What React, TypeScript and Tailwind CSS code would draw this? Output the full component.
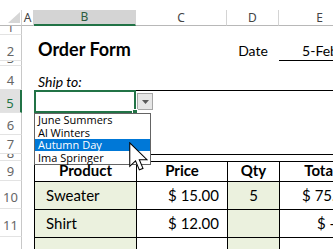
import React from "react";

type Row = { n: number; h: string; pb: string; sel?: boolean };

const rows: Row[] = [
  { n: 1, h: "h-[9px]", pb: "pb-[0px]" },
  { n: 2, h: "h-[26px]", pb: "pb-[2px]" },
  { n: 3, h: "h-[5px]", pb: "pb-[0px]" },
  { n: 4, h: "h-[24px]", pb: "pb-[2px]" },
  { n: 5, h: "h-[23px]", pb: "pb-[2px]", sel: true },
  { n: 6, h: "h-[22px]", pb: "pb-[2px]" },
  { n: 7, h: "h-[19px]", pb: "pb-[2px]" },
  { n: 8, h: "h-[7px]", pb: "pb-[0px]" },
  { n: 9, h: "h-[20px]", pb: "pb-[2px]" },
  { n: 10, h: "h-[28px]", pb: "pb-[4px]" },
  { n: 11, h: "h-[28px]", pb: "pb-[4px]" },
  { n: 12, h: "h-[28px]", pb: "pb-[4px]" },
];

const colA = "w-[12px] shrink-0";
const colB = "w-[102px] shrink-0";
const colC = "w-[91px] shrink-0";
const colD = "w-[52px] shrink-0";
const colE = "w-[82px] shrink-0";

const tbl = "border-t border-l border-black";
const tint = "bg-[#ebf1de]";

const names = ["June Summers", "Al Winters", "Autumn Day", "Ima Springer"];

function RowHeader({ row }: { row: Row }) {
  return (
    <div
      className={`${row.h} ${row.pb} flex items-end justify-center overflow-hidden border-b border-b-[#e3e3e3] ${
        row.sel
          ? "bg-[#e1e1e1] border-r-2 border-r-[#217346] text-[#217346]"
          : "border-r border-r-[#c8c8c8] text-[#666666]"
      }`}
    >
      <span>{row.n}</span>
    </div>
  );
}

function ColHeader() {
  const cell = "flex items-center justify-center border-r border-b border-r-[#d4d4d4] border-b-[#b8b8b8]";
  return (
    <div className="flex h-[16px] font-['Noto_Sans',sans-serif] text-[12px] leading-none text-[#444444]">
      <div className={`w-[22px] shrink-0 relative ${cell}`}>
        <svg width="21" height="15" className="absolute left-0 top-0">
          <polygon points="8,13 20,13 20,2" fill="#d6d6d6" />
        </svg>
      </div>
      <div className={`${colA} ${cell}`}>A</div>
      <div className={`${colB} flex items-center justify-center border-r border-r-[#d4d4d4] border-b-2 border-b-[#217346] bg-[#d4d4d4] text-[#2b5c3e]`}>
        B
      </div>
      <div className={`${colC} ${cell}`}>C</div>
      <div className={`${colD} ${cell}`}>D</div>
      <div className={`${colE} ${cell}`}>E</div>
    </div>
  );
}

function DropList() {
  return (
    <div className="absolute left-0 top-0 z-10 w-[117px] border border-[#646464] bg-white font-['Open_Sans',sans-serif] text-[11px] text-black">
      {names.map((name, i) => (
        <div
          key={name}
          className={`pl-[3px] whitespace-nowrap ${i % 2 === 0 ? "h-[12px] leading-[12px]" : "h-[13px] leading-[13px]"} ${
            i === 2 ? "bg-[#0078d7] text-white" : ""
          }`}
        >
          {name}
        </div>
      ))}
    </div>
  );
}

function Sheet() {
  return (
    <div className="flex flex-col font-['Lato',sans-serif] text-black">
      {/* 1 */}
      <div className="flex h-[9px]" />
      {/* 2 */}
      <div className="flex h-[26px]">
        <div className={colA} />
        <div className={`${colB} flex items-end pl-[4px] pb-[3px] text-[18px] font-bold leading-none whitespace-nowrap`}>
          Order Form
        </div>
        <div className={colC} />
        <div className={`${colD} flex items-end justify-center pb-[3px] text-[14px] leading-none`}>Date</div>
        <div className={`${colE} flex items-end justify-center pb-[2px] text-[14px] leading-none border-b border-black`}>
          5-Feb
        </div>
      </div>
      {/* 3 */}
      <div className="flex h-[5px]" />
      {/* 4 */}
      <div className="flex h-[24px]">
        <div className={colA} />
        <div className={`${colB} flex items-end pl-[4px] pb-[1px] text-[14px] italic leading-none whitespace-nowrap`}>
          Ship to:
        </div>
      </div>
      {/* 5 */}
      <div className="flex h-[23px]">
        <div className={colA} />
        <div className={`${colB} relative border-2 border-[#217346]`}>
          <div className="absolute right-[-4px] bottom-[-4px] w-[6px] h-[6px] bg-[#217346] border border-white" />
        </div>
        <div className={`${colC} flex items-start border-t border-black`}>
          <div className="ml-[1px] mt-[2px] w-[16px] h-[17px] flex items-center justify-center border border-[#a6a6a6] bg-[#e6e6e6]">
            <svg width="7" height="4" viewBox="0 0 7 4">
              <polygon points="0,0 7,0 3.5,4" fill="#5a5a5a" />
            </svg>
          </div>
        </div>
        <div className={`${colD} border-t border-black`} />
        <div className={`${colE} border-t border-black`} />
      </div>
      {/* 6 */}
      <div className="flex h-[22px]">
        <div className={colA} />
        <div className={`${colB} relative`}>
          <DropList />
        </div>
      </div>
      {/* 7 */}
      <div className="flex h-[19px]" />
      {/* 8 */}
      <div className="flex h-[7px]">
        <div className={colA} />
        <div className={`${colB} border-t border-black`} />
        <div className={`${colC} border-t border-black`} />
        <div className={`${colD} border-t border-black`} />
        <div className={`${colE} border-t border-black`} />
      </div>
      {/* 9 */}
      <div className="flex h-[20px] text-[15px] font-bold leading-none">
        <div className={colA} />
        <div className={`${colB} ${tbl} flex items-end justify-center pb-[3px]`}>Product</div>
        <div className={`${colC} ${tbl} flex items-end justify-center pb-[3px]`}>Price</div>
        <div className={`${colD} ${tbl} flex items-end justify-center pb-[3px]`}>Qty</div>
        <div className={`${colE} ${tbl} flex items-end justify-center pb-[3px]`}>Total</div>
      </div>
      {/* 10 */}
      <div className="flex h-[28px] text-[15px] leading-none">
        <div className={colA} />
        <div className={`${colB} ${tbl} ${tint} flex items-center pl-[11px]`}>Sweater</div>
        <div className={`${colC} ${tbl} flex items-center justify-end pr-[8px]`}>$ 15.00</div>
        <div className={`${colD} ${tbl} ${tint} flex items-center justify-center`}>5</div>
        <div className={`${colE} ${tbl} flex items-center justify-end pr-[8px] whitespace-nowrap`}>$ 75.00</div>
      </div>
      {/* 11 */}
      <div className="flex h-[28px] text-[15px] leading-none">
        <div className={colA} />
        <div className={`${colB} ${tbl} ${tint} flex items-center pl-[11px]`}>Shirt</div>
        <div className={`${colC} ${tbl} flex items-center justify-end pr-[8px]`}>$ 12.00</div>
        <div className={`${colD} ${tbl} ${tint}`} />
        <div className={`${colE} ${tbl} flex items-center justify-end pr-[26px] whitespace-nowrap`}>$ -</div>
      </div>
      {/* 12 */}
      <div className="flex h-[28px]">
        <div className={colA} />
        <div className={`${colB} ${tbl} ${tint}`} />
        <div className={`${colC} ${tbl}`} />
        <div className={`${colD} ${tbl} ${tint}`} />
        <div className={`${colE} ${tbl}`} />
      </div>
    </div>
  );
}

export default function App() {
  return (
    <div className="relative w-[333px] h-[249px] overflow-hidden bg-white">
      <div className="h-[10px]" />
      <ColHeader />
      <div className="flex">
        <div className="w-[22px] shrink-0 flex flex-col font-['Noto_Sans',sans-serif] text-[13px] leading-none">
          {rows.map((r) => (
            <RowHeader key={r.n} row={r} />
          ))}
        </div>
        <Sheet />
      </div>
      <svg
        width="19"
        height="29"
        viewBox="0 0 12.5 19"
        className="absolute left-[129px] top-[142px] z-20"
      >
        <path
          d="M0.5 0.5 V16 L4.3 12.4 L6.8 18.3 L9.2 17.3 L6.8 11.6 H11.8 Z"
          fill="white"
          stroke="black"
          strokeWidth="0.7"
        />
      </svg>
    </div>
  );
}
